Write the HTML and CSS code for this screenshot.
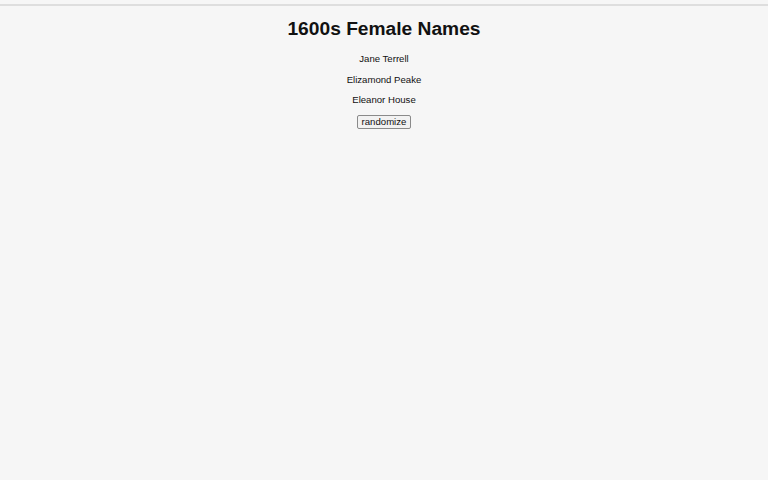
FILE: index.html
```html
<!DOCTYPE html>
<html>
<head>
<meta charset="utf-8">
<link rel="stylesheet" href="styles.css">
</head>
<body>
<div class="topbar"></div>
<main class="page">
  <h1 class="title">1600s Female Names</h1>
  <ul class="names">
    <li>Jane Terrell</li>
    <li>Elizamond Peake</li>
    <li>Eleanor House</li>
  </ul>
  <button class="shuffle" type="button">randomize</button>
</main>
</body>
</html>
```
FILE: styles.css
```css
html, body {
  margin: 0;
  padding: 0;
  background: #f6f6f6;
  font-family: "Liberation Sans", Arial, sans-serif;
  color: #111;
}

.topbar {
  height: 4px;
  border-bottom: 2px solid #dedede;
}

.page {
  display: flex;
  flex-direction: column;
  align-items: center;
}

.title {
  margin: 12px 0 0;
  font-size: 19.2px;
  font-weight: bold;
  line-height: 22px;
}

.names {
  list-style: none;
  margin: 13px 0 0;
  padding: 0;
  display: flex;
  flex-direction: column;
  align-items: center;
  gap: 8.5px;
  font-size: 9.6px;
  line-height: 12px;
}

.shuffle {
  margin-top: 9px;
  height: 14px;
  font-family: "Liberation Sans", Arial, sans-serif;
  font-size: 9.6px;
  line-height: 10px;
  padding: 0 4px;
  background: #f2f2f2;
  border: 1px solid #8a8a8a;
  border-radius: 2px;
  color: #111;
}
```
